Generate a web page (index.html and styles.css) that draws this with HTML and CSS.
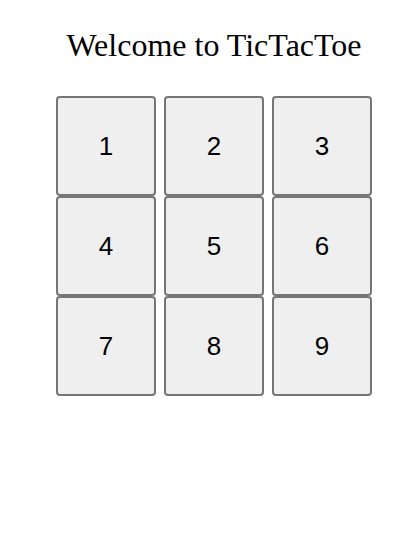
FILE: index.html
```html
<!DOCTYPE html>
<html lang="en">
	<head>
		<meta charset="UTF-8" />
		<title>TicTacToe</title>
		<link rel="stylesheet" href="styles.css">
	</head>
	<body>
		<div class="game">
			<h1>Welcome to TicTacToe</h1>

			<div class="board">
				<button class="cell">1</button>
				<button class="cell">2</button>
				<button class="cell">3</button>
				<button class="cell">4</button>
				<button class="cell">5</button>
				<button class="cell">6</button>
				<button class="cell">7</button>
				<button class="cell">8</button>
				<button class="cell">9</button>
			</div>
		</div>
	</body>
</html>
```

FILE: styles.css
```css
body {
	margin: 0;
	font-family: "Liberation Serif", "Times New Roman", serif;
	background: white;
}

.game {
	width: 316px;
	margin-left: 56px;
	padding-top: 25px;
}

h1 {
	margin: 0;
	text-align: center;
	font-size: 32px;
	font-weight: normal;
	line-height: 40px;
}

.board {
	display: grid;
	grid-template-columns: repeat(3, 100px);
	grid-auto-rows: 100px;
	column-gap: 8px;
	margin-top: 31px;
}

.cell {
	margin: 0;
	padding: 0;
	font-family: "Liberation Sans", Arial, sans-serif;
	font-size: 26px;
	color: black;
	background: #efefef;
	border: 2px solid #767676;
	border-radius: 4px;
}
```
